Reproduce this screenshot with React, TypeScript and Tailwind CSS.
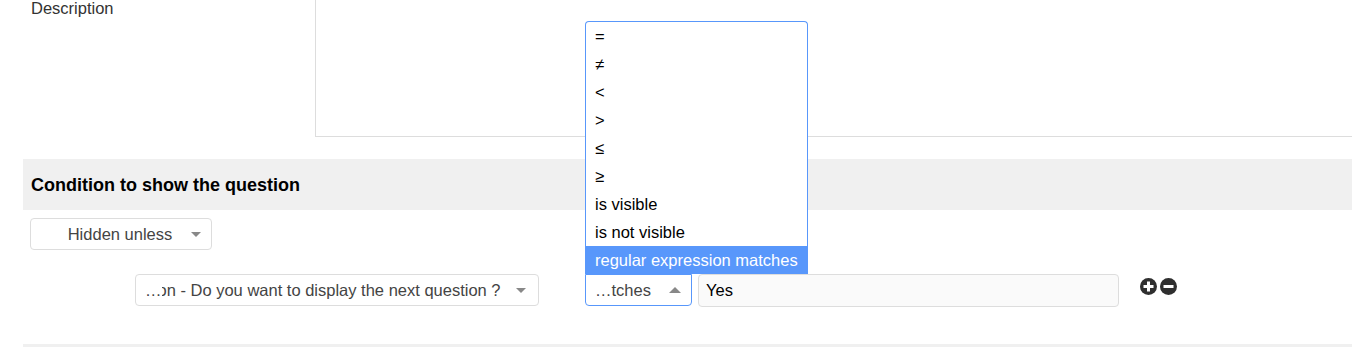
const options = ["=", "≠", "<", ">", "≤", "≥", "is visible", "is not visible", "regular expression matches"];

const CircleIcon = ({ plus }: { plus?: boolean }) => (
  <svg width="17" height="17" viewBox="0 0 17 17">
    <circle cx="8.5" cy="8.5" r="8.5" fill="#2f2f2f" />
    <rect x="3.5" y="7" width="10" height="3" fill="#fff" />
    {plus && <rect x="7" y="3.5" width="3" height="10" fill="#fff" />}
  </svg>
);

const ArrowDown = () => (
  <span className="w-0 h-0 border-x-[5px] border-x-transparent border-t-[5px] border-t-[#888]" />
);

const App = () => {
  return (
    <div className="relative w-full h-[347px] overflow-hidden bg-white font-['Liberation_Sans',Arial,sans-serif] text-[16.5px]">
      <div className="flex -mt-[12px]">
        <div className="w-[315px] pl-[31px] pt-[11px] leading-[19px] text-[#333]">Description</div>
        <div className="flex-1 h-[149px] border border-[#ddd] -mr-[4px]" />
      </div>

      <div className="mt-[22px] ml-[23px] h-[51px] bg-[#f0f0f0] flex items-center pl-[8px] pt-[2px]">
        <span className="text-[18px] font-bold text-black">Condition to show the question</span>
      </div>

      <div className="mt-[8px] ml-[30px] w-[182px] h-[32px] border border-[#ddd] rounded flex items-center justify-center relative text-[#444]">
        <span className="-ml-[2px]">Hidden unless</span>
        <span className="absolute right-[10px] top-[13px] flex">
          <ArrowDown />
        </span>
      </div>

      <div className="mt-[23px] flex items-center h-[34px]">
        <div className="ml-[135px] w-[404px] h-[32px] border border-[#ddd] rounded flex items-center pl-[9px] pr-[12px] text-[#444]">
          <span>…</span>
          <div className="overflow-hidden flex-1 whitespace-nowrap">
            <span className="-ml-[4px] inline-block">on - Do you want to display the next question ?</span>
          </div>
          <ArrowDown />
        </div>

        <div className="ml-[46px] w-[107px] h-[32px] border border-[#5897fb] rounded-b flex items-center pl-[9px] pr-[10px] text-[#444]">
          <span>…</span>
          <span className="flex-1">tches</span>
          <span className="w-0 h-0 border-x-[6px] border-x-transparent border-b-[6px] border-b-[#888]" />
        </div>

        <div className="ml-[6px] w-[421px] h-[33px] border border-[#ddd] rounded bg-[#fafafa] flex items-center pl-[7px] text-black">
          Yes
        </div>

        <div className="ml-[21px] flex gap-[3px] -mt-[7px]">
          <CircleIcon plus />
          <CircleIcon />
        </div>
      </div>

      <div className="mt-[37px] ml-[23px] h-[3px] bg-[#f0f0f0]" />

      <div className="absolute left-[585px] top-[21px] w-[223px] bg-white border border-[#5897fb] border-b-0 rounded-t text-black">
        {options.map((o, i) => (
          <div
            key={o}
            className={
              i === options.length - 1
                ? "h-[28px] leading-[28px] -mx-px pl-[10px] bg-[#5897fb] text-white"
                : "h-[28px] leading-[28px] pl-[9px]"
            }
          >
            {o}
          </div>
        ))}
      </div>
    </div>
  );
};

export default App;
